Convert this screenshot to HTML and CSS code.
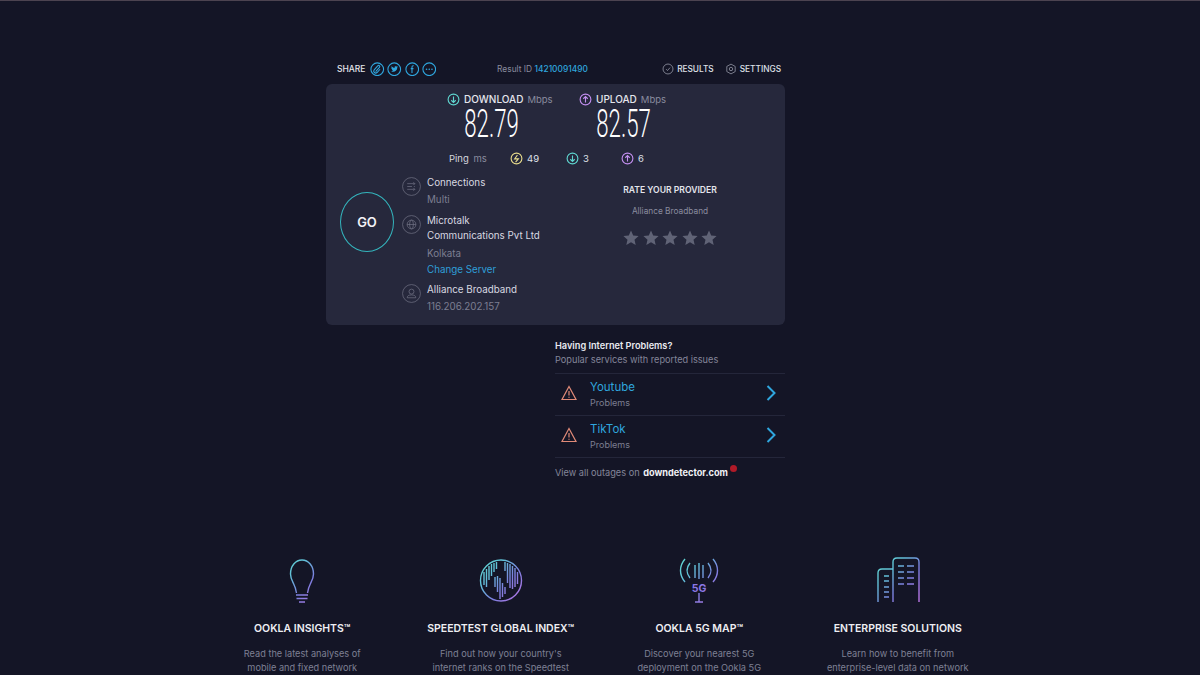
FILE: index.html
```html
<!DOCTYPE html>
<html lang="en">
<head>
<meta charset="utf-8">
<title>Speedtest result</title>
<link rel="stylesheet" href="styles.css">
</head>
<body>
<svg class="defs" aria-hidden="true"><defs>
<linearGradient id="g" gradientUnits="userSpaceOnUse" x1="2" y1="4" x2="44" y2="42"><stop offset="0" stop-color="#5fd8d0"/><stop offset=".3" stop-color="#62c0d8"/><stop offset=".62" stop-color="#7d7fe0"/><stop offset="1" stop-color="#b874e4"/></linearGradient>
</defs></svg>
<main class="page">
  <section class="result">
    <header class="topbar">
      <div class="share">
        <span class="share-label">SHARE</span>
        <svg class="share-icon" viewBox="0 0 16 16"><circle cx="8" cy="8" r="7"/><path d="M6.200 10.600 10.400 6a1.300 1.300 0 0 0-1.900-1.800L4.600 8.600a2.200 2.200 0 0 0 3.200 3l3.300-3.600"/></svg>
        <svg class="share-icon" viewBox="0 0 16 16"><circle cx="8" cy="8" r="7"/><path class="solid" d="M12.200 5.400c-.3.100-.6.200-.9.200.3-.2.600-.5.700-.9-.3.200-.7.300-1 .4a1.600 1.600 0 0 0-2.700 1.400C7 6.400 5.800 5.800 5 4.800c-.4.700-.2 1.600.5 2.100-.3 0-.5-.1-.7-.2 0 .8.500 1.400 1.300 1.600-.2.100-.5.100-.7 0 .2.600.8 1.100 1.500 1.100-.7.500-1.500.8-2.400.7 2.800 1.700 7-.1 6.900-4.400.3-.2.600-.5.800-.8z"/></svg>
        <svg class="share-icon" viewBox="0 0 16 16"><circle cx="8" cy="8" r="7"/><path d="M9.600 4.200H9c-.9 0-1.300.5-1.300 1.400V12M6.300 7.300h3"/></svg>
        <svg class="share-icon" viewBox="0 0 16 16"><circle cx="8" cy="8" r="7"/><circle class="solid" cx="5" cy="8" r=".9"/><circle class="solid" cx="8" cy="8" r=".9"/><circle class="solid" cx="11" cy="8" r=".9"/></svg>
      </div>
      <div class="result-id">Result ID <a class="link-strong">14210091490</a></div>
      <nav class="top-links">
        <span class="top-link"><svg class="top-icon" viewBox="0 0 14 14"><circle cx="7" cy="7" r="5.800"/><path d="m4.800 7.200 1.600 1.600 3-3.400"/></svg>RESULTS</span>
        <span class="top-link"><svg class="top-icon" viewBox="0 0 14 14"><path d="M7 1.300 11.900 4v6L7 12.700 2.100 10V4z"/><circle cx="7" cy="7" r="2"/></svg>SETTINGS</span>
      </nav>
    </header>

    <div class="card">
      <div class="speeds">
        <div class="speed">
          <div class="speed-label"><svg class="round-icon teal" viewBox="0 0 14 14"><circle cx="7" cy="7" r="5.800"/><path d="M7 3.800v6.400M4.600 7.800 7 10.200l2.400-2.400"/></svg><b>DOWNLOAD</b> <span class="unit">Mbps</span></div>
          <div class="speed-value">82.79</div>
        </div>
        <div class="speed">
          <div class="speed-label"><svg class="round-icon violet" viewBox="0 0 14 14"><circle cx="7" cy="7" r="5.800"/><path d="M7 10.200V3.800M4.600 6.200 7 3.800l2.400 2.400"/></svg><b>UPLOAD</b> <span class="unit">Mbps</span></div>
          <div class="speed-value">82.57</div>
        </div>
      </div>

      <div class="ping-row">
        <span class="ping-label">Ping <span class="unit ping-unit">ms</span></span>
        <span class="ping-item ping-idle"><svg class="round-icon yellow" viewBox="0 0 14 14"><circle cx="7" cy="7" r="5.800"/><path d="M8 3.200 5 7.400h4l-3 3.400"/></svg>49</span>
        <span class="ping-item ping-down"><svg class="round-icon teal" viewBox="0 0 14 14"><circle cx="7" cy="7" r="5.800"/><path d="M7 3.800v6.400M4.600 7.800 7 10.200l2.400-2.400"/></svg>3</span>
        <span class="ping-item"><svg class="round-icon violet" viewBox="0 0 14 14"><circle cx="7" cy="7" r="5.800"/><path d="M7 10.200V3.800M4.600 6.200 7 3.800l2.400 2.400"/></svg>6</span>
      </div>

      <div class="details">
        <div class="go-wrap"><div class="go">GO</div></div>
        <div class="info">
          <div class="info-block first-block">
            <svg class="info-icon" viewBox="0 0 20 20"><circle cx="10" cy="10" r="9.400"/><path d="M5.500 7h8m-1.500-1.500L13.500 7 12 8.500M5.500 10h5m2 0h1M5.500 13h8m-1.500-1.500 1.500 1.500-1.500 1.500"/></svg>
            <div>
              <div class="info-main">Connections</div>
              <div class="info-sub gap-s">Multi</div>
            </div>
          </div>
          <div class="info-block gap-b">
            <svg class="info-icon" viewBox="0 0 20 20"><circle cx="10" cy="10" r="9.400"/><circle cx="10" cy="10" r="4.600"/><ellipse cx="10" cy="10" rx="2" ry="4.600"/><path d="M5.400 10h9.200"/></svg>
            <div>
              <div class="info-main">Microtalk</div>
              <div class="info-main line-2">Communications Pvt Ltd</div>
              <div class="info-sub gap-a">Kolkata</div>
              <div class="info-link">Change Server</div>
            </div>
          </div>
          <div class="info-block gap-c">
            <svg class="info-icon" viewBox="0 0 20 20"><circle cx="10" cy="10" r="9.400"/><circle cx="10" cy="8" r="2.600"/><path d="M5.500 14.500c0-2 1.500-3 4.500-3s4.500 1 4.500 3z"/></svg>
            <div>
              <div class="info-main">Alliance Broadband</div>
              <div class="info-sub gap-s">116.206.202.157</div>
            </div>
          </div>
        </div>
        <div class="rate">
          <div class="rate-title">RATE YOUR PROVIDER</div>
          <div class="rate-name">Alliance Broadband</div>
          <div class="stars">
            <svg class="star" viewBox="0 0 16 16"><path d="m8 .6 2.200 5 5.400.5-4.100 3.600 1.200 5.300L8 12.200 3.300 15l1.200-5.300L.4 6.100l5.400-.5z"/></svg>
            <svg class="star" viewBox="0 0 16 16"><path d="m8 .6 2.200 5 5.400.5-4.100 3.600 1.200 5.300L8 12.200 3.300 15l1.200-5.300L.4 6.100l5.400-.5z"/></svg>
            <svg class="star" viewBox="0 0 16 16"><path d="m8 .6 2.200 5 5.400.5-4.100 3.600 1.200 5.300L8 12.200 3.300 15l1.200-5.300L.4 6.100l5.400-.5z"/></svg>
            <svg class="star" viewBox="0 0 16 16"><path d="m8 .6 2.200 5 5.400.5-4.100 3.600 1.200 5.300L8 12.200 3.300 15l1.200-5.300L.4 6.100l5.400-.5z"/></svg>
            <svg class="star" viewBox="0 0 16 16"><path d="m8 .6 2.200 5 5.400.5-4.100 3.600 1.200 5.300L8 12.200 3.300 15l1.200-5.300L.4 6.100l5.400-.5z"/></svg>
          </div>
        </div>
      </div>
    </div>

    <aside class="problems">
      <h2 class="problems-title">Having Internet Problems?</h2>
      <p class="problems-sub">Popular services with reported issues</p>
      <div class="problem-row">
        <svg class="warn" viewBox="0 0 16 16"><path d="M8 1.500 15 14.500H1z"/><path d="M8 6v4.500M8 11.800v1"/></svg>
        <div class="problem-text"><div class="problem-name">Youtube</div><div class="problem-sub">Problems</div></div>
        <svg class="chevron" viewBox="0 0 10 16"><path d="m1.500 1 7 7-7 7"/></svg>
      </div>
      <div class="problem-row">
        <svg class="warn" viewBox="0 0 16 16"><path d="M8 1.500 15 14.500H1z"/><path d="M8 6v4.500M8 11.800v1"/></svg>
        <div class="problem-text"><div class="problem-name">TikTok</div><div class="problem-sub">Problems</div></div>
        <svg class="chevron" viewBox="0 0 10 16"><path d="m1.500 1 7 7-7 7"/></svg>
      </div>
      <p class="outages">View all outages on <b>downdetector.com</b><span class="badge"></span></p>
    </aside>
  </section>

  <section class="features">
    <article class="feature">
      <svg class="feature-icon" viewBox="0 0 46 46"><path d="M17.500 36c-.5-4-1-5.500-3-9.500-1.500-3-3-5.500-3-9.500C11.500 9 16.500 3 23 3s11.500 6 11.500 14c0 4-1.500 6.500-3 9.500-2 4-2.500 5.500-3 9.500"/><path d="M17 38h12M17.500 41.500h11M20 45h6"/></svg>
      <h3 class="feature-title">OOKLA INSIGHTS™</h3>
      <p class="feature-text">Read the latest analyses of<br>mobile and fixed network</p>
    </article>
    <article class="feature">
      <svg class="feature-icon" viewBox="0 0 46 46"><circle cx="23" cy="23.500" r="20.500"/><path d="M6 15v13M8.500 12v18M11 9v14M13.500 7v12M16 6v9M18.500 5v7M27 5v9M29.500 6v20M32 7v24M34.500 9v23M37 11v19M39.500 15v12M17 20v10M19.500 19v16M22 21v21M24.500 26v14M27 30v7"/></svg>
      <h3 class="feature-title">SPEEDTEST GLOBAL INDEX™</h3>
      <p class="feature-text">Find out how your country's<br>internet ranks on the Speedtest</p>
    </article>
    <article class="feature">
      <svg class="feature-icon" viewBox="0 0 46 46"><path d="M9 2C3 9 3 18 9 25M37 2c6 7 6 16 0 23M14 6c-4 5-4 10 0 15M32 6c4 5 4 10 0 15M19 8v13M23 6v16M27 8v13M23 36v9M19 45h8"/><text class="fiveg" x="23" y="35" text-anchor="middle">5G</text></svg>
      <h3 class="feature-title">OOKLA 5G MAP™</h3>
      <p class="feature-text">Discover your nearest 5G<br>deployment on the Ookla 5G</p>
    </article>
    <article class="feature">
      <svg class="feature-icon" viewBox="0 0 46 46"><path d="M18 45V5c0-3 1.500-4 4-4h18c3 0 4 1 4 4v40M3 45V16c0-3 1.500-4 4-4h11M9 19h5M9 24h5M9 30h5M9 35h5M9 40h5M23 9h6M32 9h7M23 15h6M32 15h7M23 21h6M32 21h7M23 27h6M32 27h7"/></svg>
      <h3 class="feature-title">ENTERPRISE SOLUTIONS</h3>
      <p class="feature-text">Learn how to benefit from<br>enterprise-level data on network</p>
    </article>
  </section>
</main>
</body>
</html>
```

FILE: styles.css
```css
* { box-sizing: border-box; }
html, body { margin: 0; height: 675px; overflow: hidden; }
body {
  background: #141526;
  border-top: 1px solid #4c4350;
  font-family: Inter, "Liberation Sans", sans-serif;
  color: #dfe0e8;
}
.defs { position: absolute; width: 0; height: 0; }
svg { display: block; fill: none; flex: none; }
h2, h3, p { margin: 0; font-weight: inherit; }

.page { height: 674px; overflow: hidden; }
.result { width: 459px; margin-left: 326px; padding-top: 60px; }

/* top bar */
.topbar { display: flex; align-items: center; height: 16px; margin-bottom: 7px; padding-left: 11px; padding-right: 4px; }
.share { display: flex; align-items: center; gap: 2.700px; width: 161px; }
.share-label { font-size: 8.500px; font-weight: 500; color: #e4e5ec; margin-right: 2px; }
.share-icon { width: 14.500px; height: 14.500px; stroke: #2fa6de; stroke-width: 1.200; }
.share-icon .solid { fill: #2fa6de; stroke: none; }
.result-id { font-size: 8.400px; color: #8a8c9f; width: 166px; }
.link-strong { color: #2fa6de; font-weight: 500; }
.top-links { display: flex; gap: 11px; }
.top-link { display: flex; align-items: center; gap: 3px; font-size: 8.300px; font-weight: 500; color: #dfe0e8; }
.top-icon { width: 12px; height: 12px; stroke: #a9abba; stroke-width: .8; }

/* card */
.card { height: 241px; background: #26283c; border-radius: 6px; padding-top: 8px; }
.speeds { display: flex; padding-left: 121px; }
.speed { width: 132px; }
.speed-label { display: flex; align-items: center; gap: 4px; height: 14px; font-size: 10px; color: #e4e5ec; white-space: nowrap; }
.speed-label b { font-weight: 500; }
.unit { color: #8a8c9f; font-weight: 400; font-size: 9.500px; }
.ping-unit { margin-left: 2px; }
.round-icon { width: 13px; height: 13px; stroke-width: 1.200; }
.teal { stroke: #5fd6d0; }
.violet { stroke: #c38ff0; }
.yellow { stroke: #e8dc8c; }
.speed-value {
  width: 88px;
  margin-left: -1.500px;
  margin-top: 1px;
  font-family: Roboto, sans-serif;
  font-weight: 300;
  font-size: 38px;
  line-height: 34px;
  color: #fff;
  text-align: center;
  transform: scaleX(.585);
  transform-origin: 44px 0;
}
.ping-row { display: flex; align-items: center; height: 14px; margin-top: 10px; padding-left: 123px; font-size: 9.500px; }
.ping-label { width: 61px; color: #d5d6de; }
.ping-item { display: flex; align-items: center; gap: 4px; color: #dfe0e8; }
.ping-idle { width: 56px; }
.ping-down { width: 55px; }

.details { display: flex; padding-left: 14px; margin-top: 9px; }
.go-wrap { width: 62px; padding-top: 18px; }
.go {
  width: 54px; height: 60px;
  border: 1px solid #34b5bd;
  border-radius: 50%;
  display: flex; align-items: center; justify-content: center;
  font-size: 13px; font-weight: 600; color: #f2f2f6;
}
.info { width: 196px; font-size: 9.800px; line-height: 15px; }
.info-block { display: flex; gap: 6px; }
.first-block { margin-top: 1px; }
.gap-b { margin-top: 6px; }
.gap-c { margin-top: 5px; }
.info-icon { width: 19px; height: 21px; margin-top: 1px; stroke: #75778a; stroke-width: .7; }
.info-main { color: #d8d9e1; }
.line-2 { white-space: nowrap; }
.info-sub { color: #7c7e91; }
.gap-a { margin-top: 3px; }
.gap-s { margin-top: 2px; }
.info-link { color: #2f9fd8; margin-top: 1px; }

.rate { width: 100px; margin-left: 22px; display: flex; flex-direction: column; align-items: center; padding-top: 10px; }
.rate-title { font-size: 8.600px; font-weight: 600; color: #e4e5ec; white-space: nowrap; line-height: 12px; }
.rate-name { font-size: 8.300px; color: #8a8c9f; margin-top: 9px; white-space: nowrap; line-height: 12px; }
.stars { display: flex; gap: 3.500px; margin-top: 13px; }
.star { width: 16px; height: 16px; fill: #606376; }

/* problems */
.problems { margin-left: 229px; padding-top: 15px; }
.problems-title { font-size: 9.200px; font-weight: 600; line-height: 12px; color: #e8e9ef; }
.problems-sub { font-size: 9.200px; line-height: 12px; margin-top: 2px; color: #84869a; }
.problem-row {
  display: flex; align-items: center;
  height: 42px;
  border-top: 1px solid #24263a;
  padding: 0 9px 3px 6px;
}
.problems-sub + .problem-row { margin-top: 7px; }
.warn { width: 16px; height: 16px; stroke: #e08a78; stroke-width: 1.200; }
.problem-text { flex: 1; margin-left: 13px; padding-top: 3px; }
.problem-name { font-size: 11.500px; line-height: 15px; color: #2fa6de; }
.problem-sub { font-size: 9px; line-height: 12px; margin-top: 2px; color: #7c7e91; }
.chevron { width: 10px; height: 16px; stroke: #2fa6de; stroke-width: 2; }
.outages { border-top: 1px solid #24263a; padding-top: 7px; font-size: 9.200px; line-height: 12px; color: #84869a; }
.outages b { color: #f0f0f5; font-weight: 700; margin-left: 1px; }
.badge { display: inline-block; width: 7px; height: 7px; border-radius: 50%; background: #b01a28; vertical-align: 4px; margin-left: 2px; }

/* features */
.features { display: flex; padding-left: 203px; margin-top: 78px; }
.feature { width: 198.500px; display: flex; flex-direction: column; align-items: center; text-align: center; }
.feature-icon { width: 46px; height: 46px; stroke: url(#g); stroke-width: 1.400; }
.fiveg { fill: #8c78e6; stroke: none; font-size: 10.500px; font-weight: 700; font-family: Inter, sans-serif; }
.feature-title { margin-top: 20px; font-size: 10.500px; line-height: 12px; font-weight: 600; color: #eeeef3; white-space: nowrap; }
.feature-text { margin-top: 12px; font-size: 9.200px; line-height: 14px; color: #7e8094; white-space: nowrap; }
```
